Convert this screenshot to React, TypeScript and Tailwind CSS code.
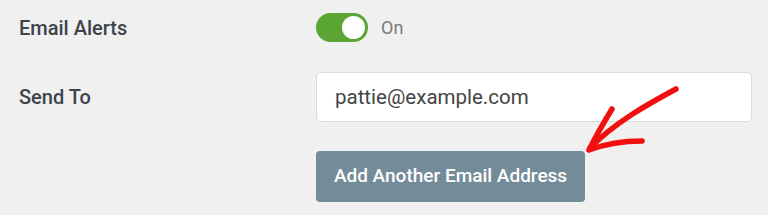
export default function App() {
  return (
    <div className="relative h-[215px] overflow-hidden bg-[#f0f0f0] pt-[13px] font-['Roboto',sans-serif] text-[#3c434a]">
      {/* Email alerts row */}
      <div className="flex h-[29px] items-center pl-[19px]">
        <div className="w-[297px] text-[20px] leading-none font-medium">Email Alerts</div>
        <div className="flex h-[29px] w-[52px] items-center justify-end rounded-full bg-[#5ba535] pr-[3px]">
          <span className="h-[23px] w-[23px] rounded-full bg-white" />
        </div>
        <span className="ml-[13px] text-[18px] leading-none text-[#7a7a7a]">On</span>
      </div>

      {/* Send to row */}
      <div className="mt-[30px] flex items-center pl-[19px]">
        <div className="w-[297px] text-[20px] leading-none font-medium">Send To</div>
        <input
          readOnly
          value="pattie@example.com"
          className="h-[50px] w-[436px] rounded-[5px] border border-[#dcdcdc] bg-white px-[18px] text-[20.5px] text-[#444] outline-none"
        />
      </div>

      {/* Add button */}
      <div className="mt-[29px] pl-[316px]">
        <button className="h-[51px] w-[269px] rounded-[4px] bg-[#748c9a] text-[19px] font-medium text-white">
          Add Another Email Address
        </button>
      </div>

      {/* Red annotation arrow */}
      <svg
        className="pointer-events-none absolute left-0 top-0"
        width="768"
        height="215"
        fill="none"
        stroke="#f20f0f"
        strokeWidth="5.5"
        strokeLinecap="round"
        strokeLinejoin="round"
      >
        <path d="M676 89 C 650 103, 615 122, 590 148" />
        <path d="M612 109 C 604 122, 596 136, 589 150 C 605 144, 624 141, 642 141" />
      </svg>
    </div>
  )
}
